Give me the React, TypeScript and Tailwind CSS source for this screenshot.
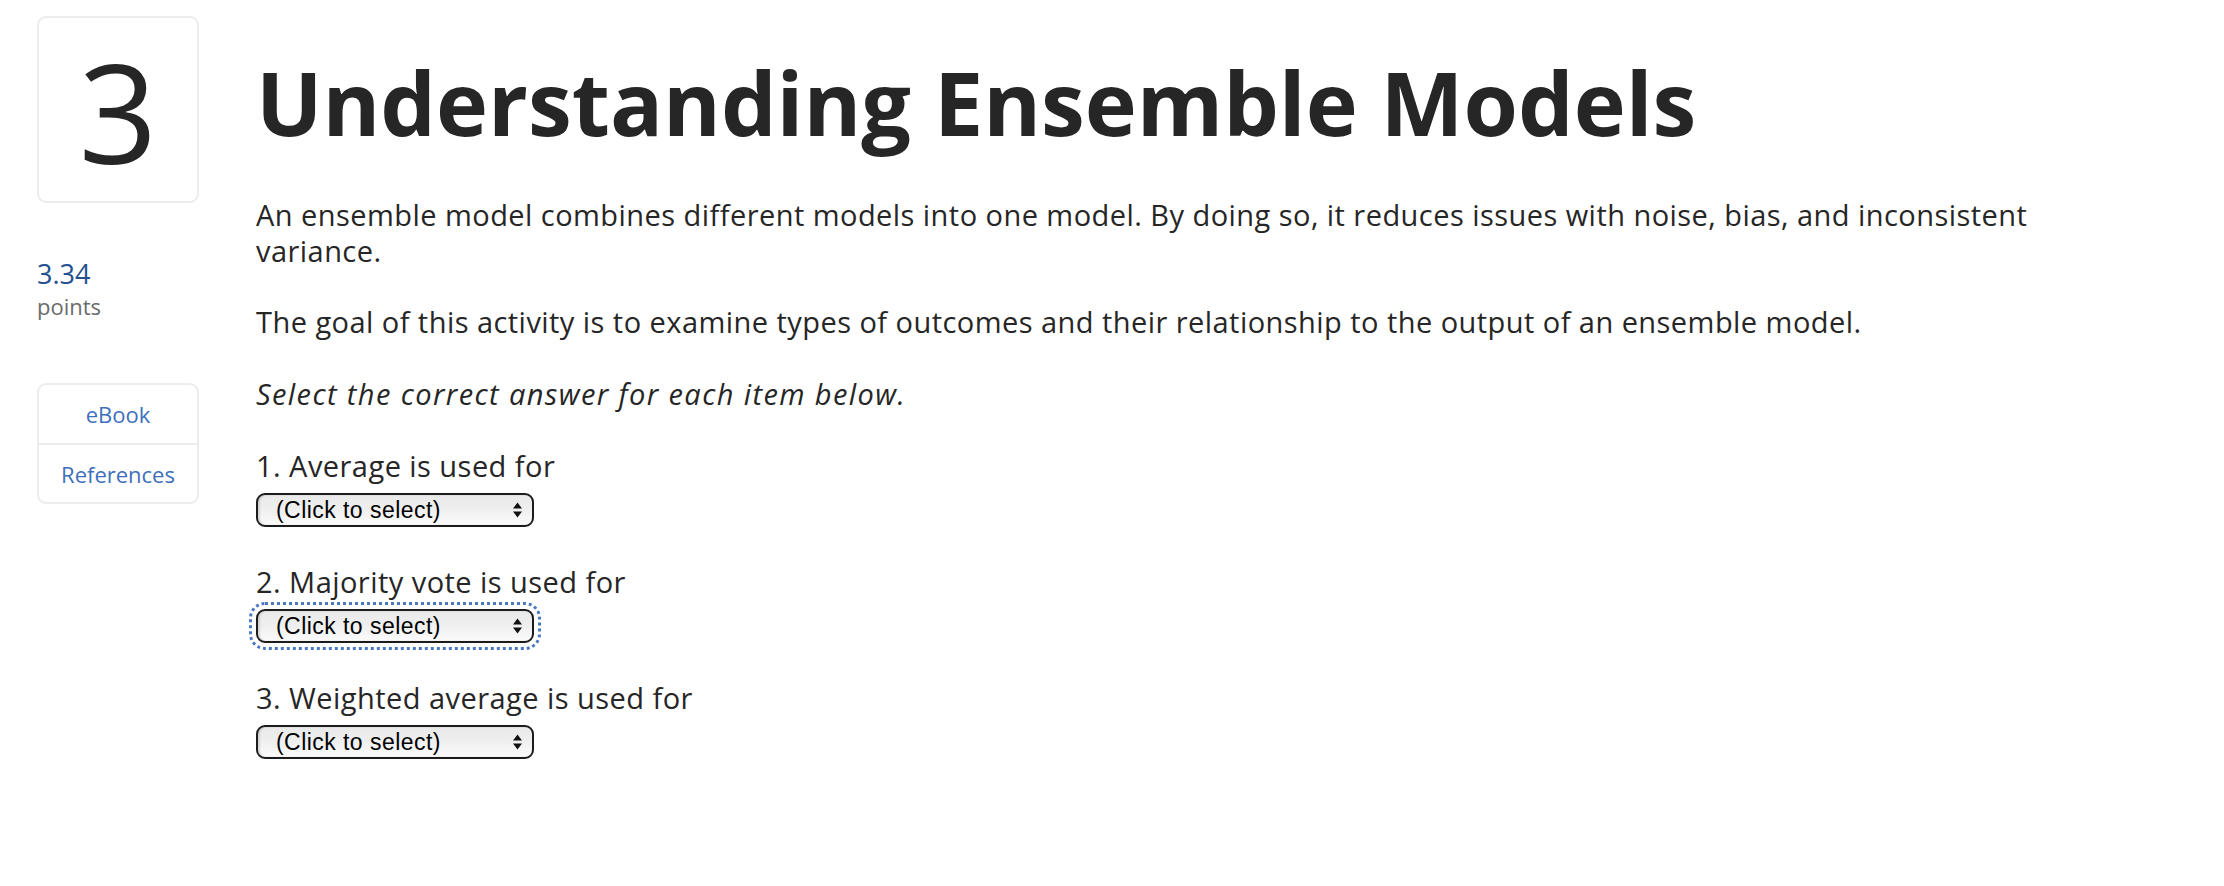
import { useState } from "react";

const questions = [
  { id: 1, label: "Average is used for" },
  { id: 2, label: "Majority vote is used for" },
  { id: 3, label: "Weighted average is used for" },
];

const options = ["(Click to select)", "Regression", "Classification", "Both regression and classification"];

function Arrows() {
  return (
    <svg className="pointer-events-none absolute right-[11px] top-1/2 -translate-y-1/2" width="11" height="17" viewBox="0 0 11 17">
      <path d="M5.5 1 L10 7 L1 7 Z" fill="#111" />
      <path d="M5.5 16 L10 10 L1 10 Z" fill="#111" />
    </svg>
  );
}

function Picker({ focused, value, onChange }: { focused?: boolean; value: string; onChange: (v: string) => void }) {
  return (
    <div
      className={
        "relative mt-[9px] w-[278px] rounded-[9px] " +
        (focused ? "outline-[3px] outline-dotted outline-[#4a78c2] outline-offset-[4px]" : "")
      }
    >
      <select
        value={value}
        onChange={(e) => onChange(e.target.value)}
        className="block h-[34px] w-full appearance-none rounded-[9px] border-2 border-[#1c1c1c] bg-gradient-to-b from-[#e9e9e9] via-[#efefef] to-[#fbfbfb] pl-[18px] pr-8 text-[23px] leading-[30px] text-black outline-none shadow-[inset_2px_0_2px_rgba(0,0,0,0.12)]"
        style={{ fontFamily: "'Liberation Sans', Arial, sans-serif" }}
      >
        {options.map((o) => (
          <option key={o} value={o}>{o}</option>
        ))}
      </select>
      <Arrows />
    </div>
  );
}

export default function App() {
  const [answers, setAnswers] = useState<Record<number, string>>({ 1: options[0], 2: options[0], 3: options[0] });

  return (
    <div className="min-h-screen bg-white text-[#262626]" style={{ fontFamily: "'Open Sans', Lato, sans-serif" }}>
      <div className="flex gap-[57px] pl-[37px] pt-[16px]">
        {/* left rail */}
        <div className="w-[162px] shrink-0">
          <div className="flex h-[187px] items-center justify-center rounded-[9px] border-2 border-[#ececec]">
            <span className="text-[138px] font-normal leading-none">3</span>
          </div>
          <div className="mt-[55px] text-[27px] leading-[32px] text-[#24508f]">3.34</div>
          <div className="mt-[3px] text-[22px] leading-[26px] text-[#6b6b6b]">points</div>
          <div className="mt-[64px] rounded-[9px] border-2 border-[#ececec] text-[22px] leading-[26px] text-[#3d6fbd]">
            <a href="#" className="flex h-[60px] items-center justify-center border-b-2 border-[#ececec]">eBook</a>
            <a href="#" className="flex h-[57px] items-center justify-center">References</a>
          </div>
        </div>

        {/* main */}
        <div className="w-[1850px] pt-[32px] text-[29px] leading-[36px] tracking-[0.45px]">
          <h1 className="mb-[41px] text-[88px] font-bold leading-[108px] tracking-normal">Understanding Ensemble Models</h1>
          <p>
            An ensemble model combines different models into one model. By doing so, it reduces issues with noise, bias, and inconsistent variance.
          </p>
          <p className="mt-[35px]">
            The goal of this activity is to examine types of outcomes and their relationship to the output of an ensemble model.
          </p>
          <p className="mt-[36px] italic tracking-[1.4px]">Select the correct answer for each item below.</p>
          <div className="mt-[36px] flex flex-col gap-[37px]">
            {questions.map((q) => (
              <div key={q.id}>
                <div>{q.id}. {q.label}</div>
                <Picker
                  focused={q.id === 2}
                  value={answers[q.id]}
                  onChange={(v) => setAnswers((p) => ({ ...p, [q.id]: v }))}
                />
              </div>
            ))}
          </div>
        </div>
      </div>
    </div>
  );
}
